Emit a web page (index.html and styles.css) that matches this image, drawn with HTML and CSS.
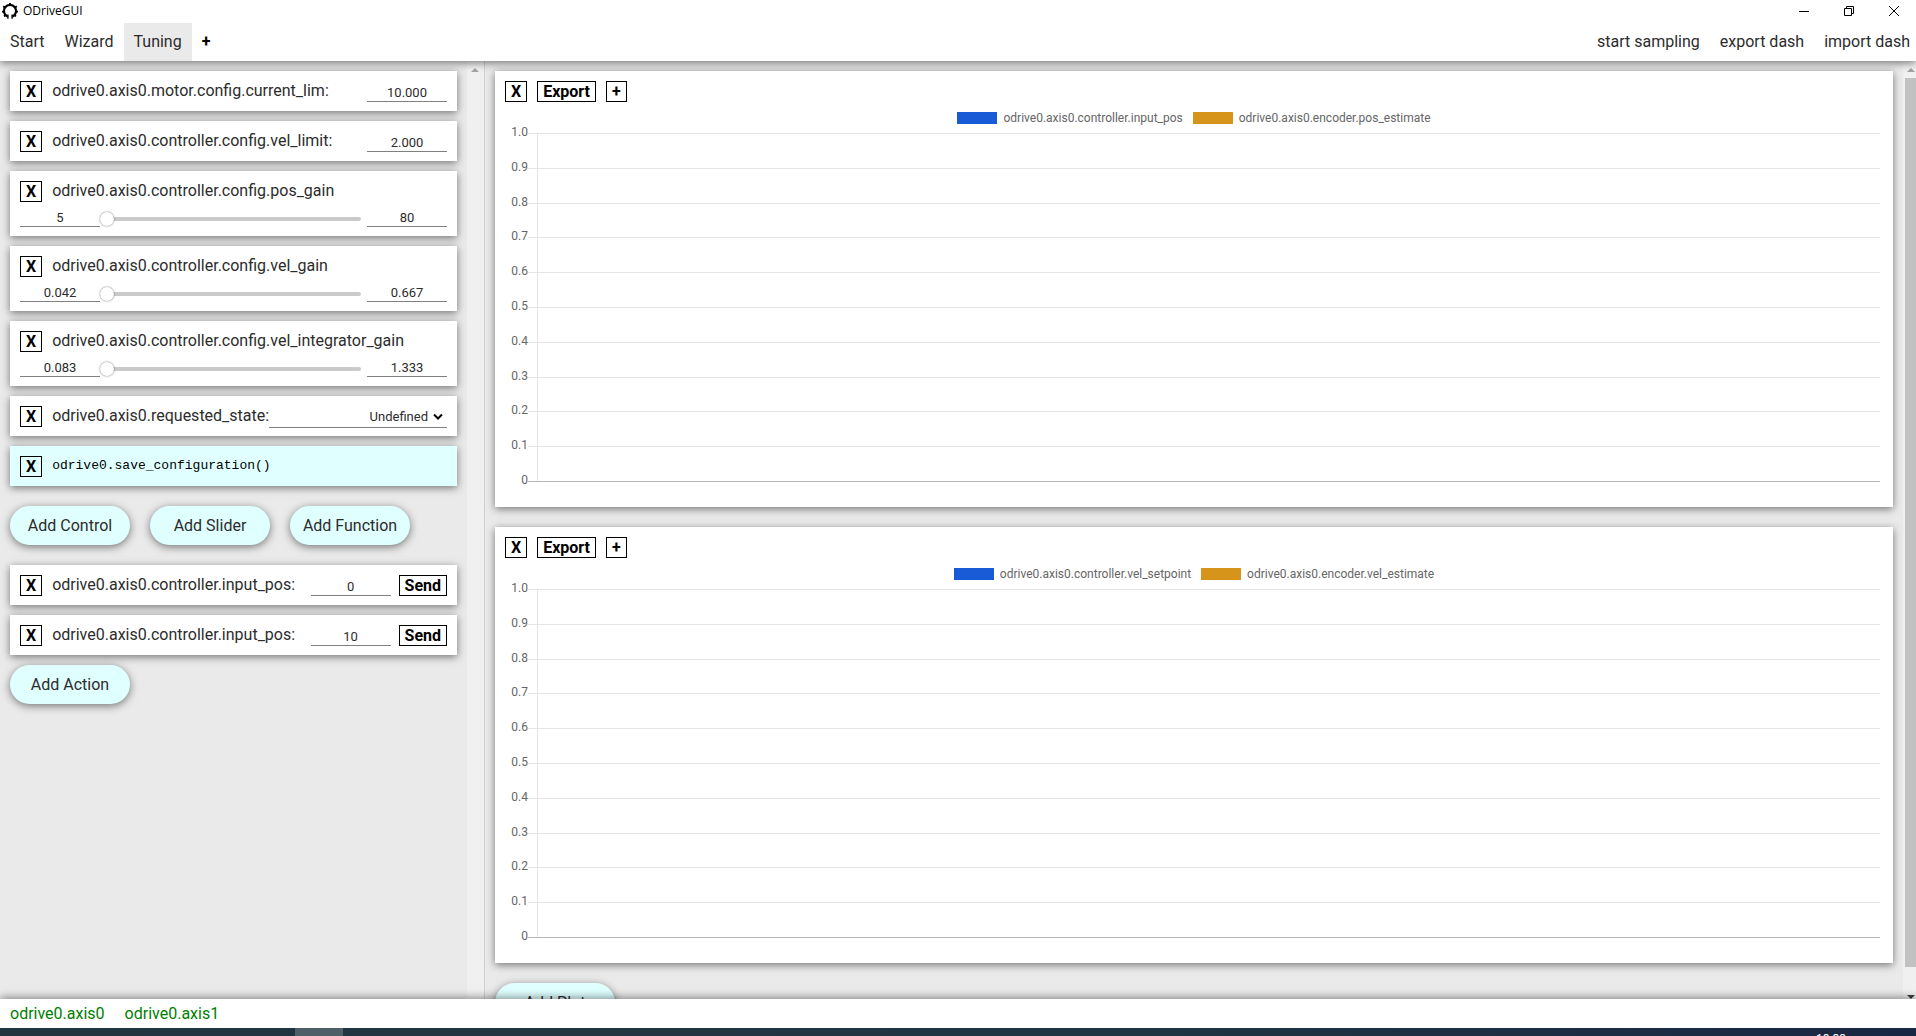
FILE: index.html
```html
<!DOCTYPE html>
<html lang="en">
<head>
  <meta charset="UTF-8">
  <meta name="viewport" content="width=device-width, initial-scale=1.0">
  <title>ODriveGUI</title>
  <link rel="stylesheet" href="styles.css">
</head>

<body>
  <header class="titlebar">
    <svg class="app-icon" viewBox="0 0 16 16">
      <path d="M5.6 13.6A6.1 6.1 0 1 1 10.4 13.6" fill="none" stroke="#000" stroke-width="2.2" />
      <path d="M8 0v2.4M1.2 3.2l2 1.6M14.8 3.2l-2 1.6M0 8.6h2.6M16 8.6h-2.6M2 13.4l1.8-1.6M14 13.4l-1.8-1.6" stroke="#000" stroke-width="1.8" />
      <path d="M5.9 11.6v4.1M10.1 11.6v4.1" stroke="#000" stroke-width="1.4" />
    </svg>
    <span class="app-name">ODriveGUI</span>
    <div class="window-controls">
      <button type="button" aria-label="Minimize"><svg viewBox="0 0 12 12"><path d="M1 6.5h10" /></svg></button>
      <button type="button" aria-label="Restore"><svg viewBox="0 0 12 12"><path d="M1.5 3.5h7v7h-7zM3.5 3.5v-2h7v7h-2" /></svg></button>
      <button type="button" aria-label="Close"><svg viewBox="0 0 12 12"><path d="M1 1l10 10M11 1L1 11" /></svg></button>
    </div>
  </header>

  <nav class="navbar">
    <button type="button" class="tab">Start</button>
    <button type="button" class="tab">Wizard</button>
    <button type="button" class="tab active">Tuning</button>
    <button type="button" class="tab add-tab">+</button>
    <div class="nav-right">
      <button type="button" class="tab">start sampling</button>
      <button type="button" class="tab">export dash</button>
      <button type="button" class="tab">import dash</button>
    </div>
  </nav>

  <main class="dashboard">
    <section class="controls">
      <div class="card row">
        <button type="button" class="close-button">X</button>
        <label class="ctrl-name" for="current-lim">odrive0.axis0.motor.config.current_lim:</label>
        <input class="value" id="current-lim" type="text" value="10.000">
      </div>
      <div class="card row">
        <button type="button" class="close-button">X</button>
        <label class="ctrl-name" for="vel-limit">odrive0.axis0.controller.config.vel_limit:</label>
        <input class="value" id="vel-limit" type="text" value="2.000">
      </div>

      <div class="card">
        <div class="row">
          <button type="button" class="close-button">X</button>
          <label class="ctrl-name" for="pos-gain">odrive0.axis0.controller.config.pos_gain</label>
        </div>
        <div class="slider-row">
          <input class="value" type="text" value="5" aria-label="pos_gain minimum">
          <input class="slider" id="pos-gain" type="range" min="5" max="80" value="5">
          <input class="value" type="text" value="80" aria-label="pos_gain maximum">
        </div>
      </div>
      <div class="card">
        <div class="row">
          <button type="button" class="close-button">X</button>
          <label class="ctrl-name" for="vel-gain">odrive0.axis0.controller.config.vel_gain</label>
        </div>
        <div class="slider-row">
          <input class="value" type="text" value="0.042" aria-label="vel_gain minimum">
          <input class="slider" id="vel-gain" type="range" min="0.042" max="0.667" step="0.001" value="0.042">
          <input class="value" type="text" value="0.667" aria-label="vel_gain maximum">
        </div>
      </div>
      <div class="card">
        <div class="row">
          <button type="button" class="close-button">X</button>
          <label class="ctrl-name" for="vel-int-gain">odrive0.axis0.controller.config.vel_integrator_gain</label>
        </div>
        <div class="slider-row">
          <input class="value" type="text" value="0.083" aria-label="vel_integrator_gain minimum">
          <input class="slider" id="vel-int-gain" type="range" min="0.083" max="1.333" step="0.001" value="0.083">
          <input class="value" type="text" value="1.333" aria-label="vel_integrator_gain maximum">
        </div>
      </div>

      <div class="card row">
        <button type="button" class="close-button">X</button>
        <label class="ctrl-name" for="requested-state">odrive0.axis0.requested_state:</label>
        <div class="select-wrap">
          <select class="state-select" id="requested-state">
            <option>Undefined</option>
          </select>
          <svg class="select-arrow" viewBox="0 0 10 8"><path d="M1 1.5l4 4 4-4" /></svg>
        </div>
      </div>

      <div class="card row function-card">
        <button type="button" class="close-button">X</button>
        <button type="button" class="function-name">odrive0.save_configuration()</button>
      </div>

      <div class="add-row">
        <button type="button" class="add-button">Add Control</button>
        <button type="button" class="add-button">Add Slider</button>
        <button type="button" class="add-button">Add Function</button>
      </div>

      <div class="card row">
        <button type="button" class="close-button">X</button>
        <label class="ctrl-name" for="input-pos-0">odrive0.axis0.controller.input_pos:</label>
        <input class="value" id="input-pos-0" type="text" value="0">
        <button type="button" class="close-button send-button">Send</button>
      </div>
      <div class="card row">
        <button type="button" class="close-button">X</button>
        <label class="ctrl-name" for="input-pos-1">odrive0.axis0.controller.input_pos:</label>
        <input class="value" id="input-pos-1" type="text" value="10">
        <button type="button" class="close-button send-button">Send</button>
      </div>
      <button type="button" class="add-button">Add Action</button>
    </section>
    <div class="scrollbar left-scroll">
      <span class="arrow-up"></span>
    </div>

    <section class="plots">
      <div class="card plot">
        <div class="plot-buttons">
          <button type="button" class="close-button">X</button>
          <button type="button" class="close-button">Export</button>
          <button type="button" class="close-button">+</button>
        </div>
        <div class="legend">
          <span class="legend-item"><span class="swatch blue"></span>odrive0.axis0.controller.input_pos</span>
          <span class="legend-item"><span class="swatch orange"></span>odrive0.axis0.encoder.pos_estimate</span>
        </div>
        <div class="chart">
          <div class="tick"><span>1.0</span></div>
          <div class="tick"><span>0.9</span></div>
          <div class="tick"><span>0.8</span></div>
          <div class="tick"><span>0.7</span></div>
          <div class="tick"><span>0.6</span></div>
          <div class="tick"><span>0.5</span></div>
          <div class="tick"><span>0.4</span></div>
          <div class="tick"><span>0.3</span></div>
          <div class="tick"><span>0.2</span></div>
          <div class="tick"><span>0.1</span></div>
          <div class="tick zero"><span>0</span></div>
        </div>
      </div>

      <div class="card plot">
        <div class="plot-buttons">
          <button type="button" class="close-button">X</button>
          <button type="button" class="close-button">Export</button>
          <button type="button" class="close-button">+</button>
        </div>
        <div class="legend">
          <span class="legend-item"><span class="swatch blue"></span>odrive0.axis0.controller.vel_setpoint</span>
          <span class="legend-item"><span class="swatch orange"></span>odrive0.axis0.encoder.vel_estimate</span>
        </div>
        <div class="chart">
          <div class="tick"><span>1.0</span></div>
          <div class="tick"><span>0.9</span></div>
          <div class="tick"><span>0.8</span></div>
          <div class="tick"><span>0.7</span></div>
          <div class="tick"><span>0.6</span></div>
          <div class="tick"><span>0.5</span></div>
          <div class="tick"><span>0.4</span></div>
          <div class="tick"><span>0.3</span></div>
          <div class="tick"><span>0.2</span></div>
          <div class="tick"><span>0.1</span></div>
          <div class="tick zero"><span>0</span></div>
        </div>
      </div>
      <button type="button" class="add-button">Add Plot</button>
    </section>
    <div class="scrollbar">
      <span class="arrow-up"></span>
      <span class="scroll-thumb"></span>
      <span class="arrow-down"></span>
    </div>
  </main>

  <footer class="axis-bar">
    <span>odrive0.axis0</span>
    <span>odrive0.axis1</span>
  </footer>
  <div class="taskbar">
    <span class="task-active"></span>
    <span class="clock">18:33</span>
  </div>
</body>
</html>
```
FILE: styles.css
```css
* {
  box-sizing: border-box;
}

body {
  margin: 0;
  height: 100vh;
  display: flex;
  flex-direction: column;
  overflow: hidden;
  background: #eaeaea;
  color: #2c2c2c;
  font-family: Roboto, "Liberation Sans", sans-serif;
  font-size: 16px;
  line-height: 20px;
}

button,
input,
select {
  margin: 0;
  padding: 0;
  border: none;
  background: none;
  color: inherit;
  font: inherit;
}

/* Window title bar */
.titlebar {
  display: flex;
  align-items: center;
  flex: none;
  height: 23px;
  padding: 0 0 2px 2px;
  background: white;
}

.app-icon {
  width: 16px;
  height: 16px;
}

.app-name {
  margin-left: 5px;
  color: black;
  font-family: "Open Sans", sans-serif;
  font-size: 12px;
}

.window-controls {
  display: flex;
  margin-left: auto;
  height: 20px;
}

.window-controls button {
  display: flex;
  align-items: center;
  justify-content: center;
  width: 45px;
}

.window-controls svg {
  width: 12px;
  height: 12px;
  fill: none;
  stroke: black;
}

/* Navigation */
.navbar {
  display: flex;
  flex: none;
  height: 38px;
  background: white;
  z-index: 2;
  box-shadow: 0 2px 8px rgba(0, 0, 0, 0.5);
  clip-path: inset(0 0 -12px 0);
}

.tab {
  padding: 0 10px;
}

.tab.active {
  background: #eaeaea;
}

.add-tab {
  color: black;
  font-weight: bold;
}

.nav-right {
  display: flex;
  margin-left: auto;
}

.nav-right .tab:last-child {
  padding-right: 6px;
}

/* Main layout */
.dashboard {
  display: flex;
  flex: 1;
  min-height: 0;
}

.controls {
  display: flex;
  flex-direction: column;
  align-items: stretch;
  gap: 10px;
  flex: none;
  width: 467px;
  padding: 10px;
}

.plots {
  display: flex;
  flex-direction: column;
  gap: 20px;
  flex: 1;
  padding: 10px;
  overflow: hidden;
}

.card {
  flex: none;
  padding: 10px 10px 9px;
  background: white;
  box-shadow: 0 2px 8px rgba(0, 0, 0, 0.5);
}

.row {
  display: flex;
  align-items: flex-start;
}

.close-button {
  height: 21px;
  padding: 0 5px;
  border: 1px solid black;
  color: black;
  font-weight: bold;
  line-height: 19px;
}

.ctrl-name {
  margin-left: 10px;
  white-space: nowrap;
}

.value {
  width: 80px;
  height: 21px;
  padding-top: 2px;
  border-bottom: 1px solid gray;
  font-size: 13px;
  text-align: center;
}

.row .value {
  margin-left: auto;
}

.send-button {
  margin-left: 8px;
}

/* Sliders */
.slider-row {
  display: flex;
  align-items: flex-end;
  height: 25px;
}

.slider {
  flex: 1;
  min-width: 0;
  height: 17px;
  margin-right: 6px;
  appearance: none;
}

.slider::-webkit-slider-runnable-track {
  height: 4px;
  border-radius: 2px;
  background: #cacaca;
}

.slider::-webkit-slider-thumb {
  appearance: none;
  width: 14px;
  height: 14px;
  margin-top: -5px;
  border-radius: 50%;
  background: white;
  box-shadow: 0 0 2px rgba(0, 0, 0, 0.6);
}

/* State drop-down */
.select-wrap {
  position: relative;
  flex: 1;
  height: 21px;
}

.state-select {
  width: 100%;
  height: 21px;
  padding-right: 19px;
  border-bottom: 1px solid gray;
  appearance: none;
  font-size: 13px;
  text-align: right;
  text-align-last: right;
}

.select-arrow {
  position: absolute;
  top: 7px;
  right: 4px;
  width: 10px;
  height: 8px;
  fill: none;
  stroke: black;
  stroke-width: 2;
  pointer-events: none;
}

.function-card {
  background: lightcyan;
}

.function-name {
  margin-left: 10px;
  color: black;
  font-family: "Liberation Mono", monospace;
  font-size: 13px;
}

.add-row {
  display: flex;
  gap: 20px;
  margin: 10px 0;
}

.add-button {
  flex: none;
  align-self: flex-start;
  width: 120px;
  height: 39px;
  border-radius: 20px;
  background: lightcyan;
  box-shadow: 0 2px 8px rgba(0, 0, 0, 0.5);
}

/* Plots */
.plot-buttons {
  display: flex;
  gap: 10px;
}

.legend {
  display: flex;
  align-items: center;
  justify-content: center;
  gap: 10px;
  height: 31px;
  color: #666;
  font-size: 12px;
}

.legend-item {
  display: flex;
  align-items: center;
}

.swatch {
  width: 40px;
  height: 12px;
  margin-right: 6px;
}

.blue {
  background: #195bd7;
}

.orange {
  background: #d6941a;
}

.chart {
  position: relative;
  display: flex;
  flex-direction: column;
  height: 365px;
  padding-right: 3px;
  color: #666;
  font-size: 12px;
}

/* y axis line */
.chart::before {
  content: "";
  position: absolute;
  top: 1px;
  bottom: 17px;
  left: 32px;
  width: 1px;
  background: #e5e5e5;
}

.tick {
  display: flex;
  align-items: flex-start;
  flex: 1;
  min-height: 0;
}

.tick span {
  width: 23px;
  margin-top: -11px;
  text-align: right;
}

.tick::after {
  content: "";
  flex: 1;
  height: 1px;
  background: #e5e5e5;
}

.tick.zero {
  flex: none;
  height: 17px;
}

.tick.zero::after {
  background: #b5b5b5;
}

/* Scrollbars */
.scrollbar {
  display: flex;
  flex-direction: column;
  align-items: center;
  flex: none;
  width: 13px;
  padding: 7px 0 0 2px;
  background: #f0f0f0;
}

.left-scroll {
  width: 18px;
  padding: 7px 1px 0 0;
  border-right: 1px solid #d0d0d0;
}

.arrow-up {
  border: 4px solid transparent;
  border-top: none;
  border-bottom: 4px solid #a3a3a3;
}

.arrow-down {
  margin-top: auto;
  border: 4px solid transparent;
  border-bottom: none;
  border-top: 4px solid #404040;
}

.scroll-thumb {
  width: 100%;
  height: 95.5%;
  margin-top: 6px;
  background: #c1c1c1;
}

/* Bottom bars */
.axis-bar {
  display: flex;
  align-items: center;
  gap: 20px;
  flex: none;
  height: 29px;
  padding: 0 10px;
  background: white;
  box-shadow: 0 -2px 8px rgba(0, 0, 0, 0.4);
  color: green;
  z-index: 2;
}

.taskbar {
  display: flex;
  flex: none;
  height: 8px;
  overflow: hidden;
  background: linear-gradient(to right, #21363f, #1f3542 60%, #1a2744);
  z-index: 2;
}

.task-active {
  width: 48px;
  margin-left: 295px;
  background: #4f5f67;
}

.clock {
  margin: 1px 70px 0 auto;
  color: white;
  font-size: 12px;
}
```
